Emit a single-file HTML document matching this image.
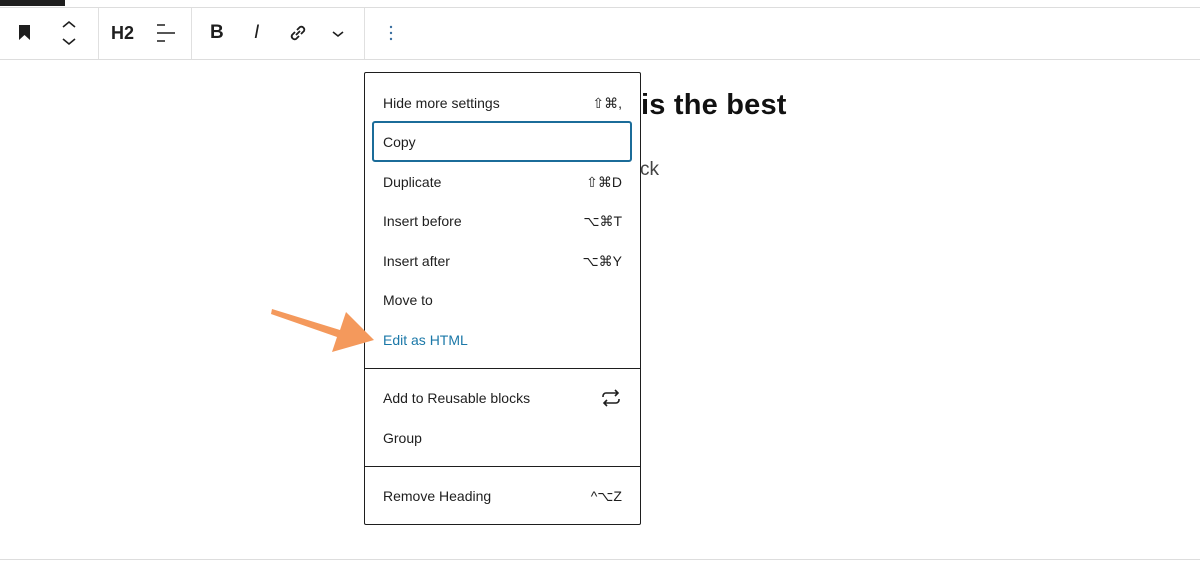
<!DOCTYPE html>
<html><head><meta charset="utf-8"><style>
*{margin:0;padding:0;box-sizing:border-box}
body{width:1200px;height:566px;background:#fff;position:relative;overflow:hidden;font-family:"Liberation Sans",sans-serif;color:#1e1e1e}
.abs{position:absolute}
.mi{position:absolute;left:383px;font-size:14px;color:#1e1e1e}
.sc{position:absolute;right:578px;font-size:14px;color:#1e1e1e;text-align:right}
</style></head><body>
<div class="abs" style="left:0;top:0;width:65px;height:6px;background:#1e1e1e"></div>
<div class="abs" style="left:0;top:7px;width:1200px;height:1px;background:#ddd"></div>
<div class="abs" style="left:0;top:59px;width:1200px;height:1px;background:#ddd"></div>
<div class="abs" style="left:98px;top:8px;width:1px;height:51px;background:#e0e0e0"></div>
<div class="abs" style="left:191px;top:8px;width:1px;height:51px;background:#e0e0e0"></div>
<div class="abs" style="left:364px;top:8px;width:1px;height:51px;background:#e0e0e0"></div>
<svg class="abs" style="left:17px;top:25px" width="16" height="16" viewBox="0 0 16 16"><path d="M2 0h11v15l-5.5-5L2 15z" fill="#1e1e1e"/></svg>
<svg class="abs" style="left:60px;top:19px" width="18" height="28" viewBox="0 0 18 28"><path d="M3 8l6-5 6 5M3 20l6 5 6-5" fill="none" stroke="#1e1e1e" stroke-width="1.6"/></svg>
<div class="abs" style="left:111px;top:23px;font-size:18px;font-weight:bold">H2</div>
<svg class="abs" style="left:155px;top:23px" width="22" height="20" viewBox="0 0 22 20"><path d="M2 2h8M2 10h18M2 18h8" stroke="#1e1e1e" stroke-width="1.6"/></svg>
<div class="abs" style="left:210px;top:22px;font-size:19px;font-weight:bold">B</div>
<div class="abs" style="left:254px;top:22px;font-size:19px;font-style:italic">I</div>
<svg class="abs" style="left:287px;top:22px" width="22" height="22" viewBox="0 0 22 22"><path d="M9 13l4-4M8 10l-3 3a3 3 0 004 4l3-3M14 12l3-3a3 3 0 00-4-4l-3 3" fill="none" stroke="#1e1e1e" stroke-width="1.8"/></svg>
<svg class="abs" style="left:331px;top:29px" width="14" height="10" viewBox="0 0 14 10"><path d="M2 3l5 4 5-4" fill="none" stroke="#1e1e1e" stroke-width="1.6"/></svg>
<svg class="abs" style="left:388px;top:24px" width="6" height="18" viewBox="0 0 6 18"><circle cx="3" cy="3" r="1.2" fill="#3a6fa0"/><circle cx="3" cy="9" r="1.2" fill="#3a6fa0"/><circle cx="3" cy="15" r="1.2" fill="#3a6fa0"/></svg>
<div class="abs" style="left:641px;top:89px;font-size:29px;font-weight:bold;color:#111;letter-spacing:0.2px">is the best</div>
<div class="abs" style="left:640px;top:159px;font-size:19px;color:#444">ck</div>
<div class="abs" style="left:364px;top:72px;width:277px;height:453px;border:1px solid #1e1e1e;background:#fff;border-radius:2px"></div>
<div class="abs" style="left:372px;top:121px;width:260px;height:41px;border:2px solid #1b6c99;border-radius:3px"></div>
<div class="mi" style="top:95px">Hide more settings</div><div class="sc" style="top:95px">⇧⌘,</div>
<div class="mi" style="top:134px">Copy</div>
<div class="mi" style="top:174px">Duplicate</div><div class="sc" style="top:174px">⇧⌘D</div>
<div class="mi" style="top:213px">Insert before</div><div class="sc" style="top:213px">⌥⌘T</div>
<div class="mi" style="top:253px">Insert after</div><div class="sc" style="top:253px">⌥⌘Y</div>
<div class="mi" style="top:292px">Move to</div>
<div class="mi" style="top:332px;color:#1b78a8">Edit as HTML</div>
<div class="abs" style="left:365px;top:368px;width:275px;height:1px;background:#1e1e1e"></div>
<div class="mi" style="top:390px">Add to Reusable blocks</div>
<svg class="abs" style="left:600px;top:387px" width="22" height="22" viewBox="0 0 22 22"><path d="M15 3l3 3-3 3M18 6H6a3 3 0 00-3 3v1M7 19l-3-3 3-3M4 16h12a3 3 0 003-3v-1" fill="none" stroke="#1e1e1e" stroke-width="1.6"/></svg>
<div class="mi" style="top:430px">Group</div>
<div class="abs" style="left:365px;top:466px;width:275px;height:1px;background:#1e1e1e"></div>
<div class="mi" style="top:488px">Remove Heading</div><div class="sc" style="top:488px">^⌥Z</div>
<div class="abs" style="left:0;top:559px;width:1200px;height:1px;background:#ddd"></div>
<svg class="abs" style="left:0;top:0" width="1200" height="566"><path d="M272 309 L340 330 L346 312 L374 340 L332 352 L337 337 L271 314 Z" fill="#f4995c"/></svg>
</body></html>
